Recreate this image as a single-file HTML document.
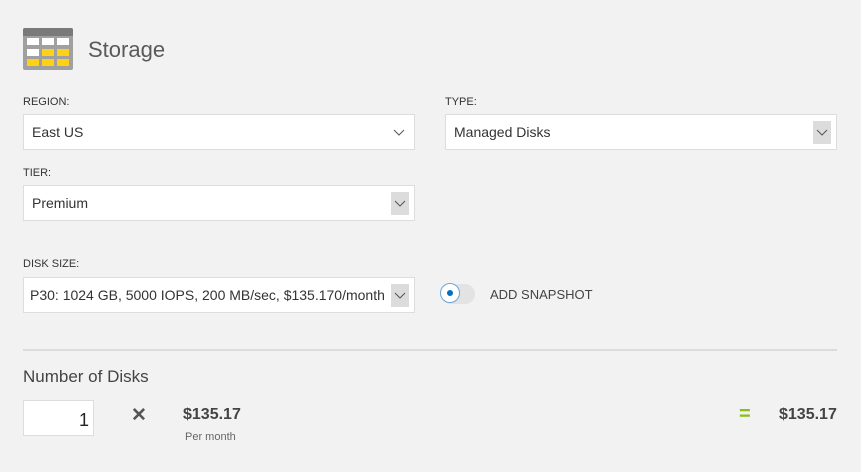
<!DOCTYPE html><html><head><style>
body{margin:0;width:861px;height:472px;background:#f2f2f2;font-family:"Liberation Sans",sans-serif;position:relative;overflow:hidden;color:#333}
.a{position:absolute}
.lbl{font-size:11px;color:#333}
.box{position:absolute;background:#fff;border:1px solid #ddd;box-sizing:border-box;height:36px;font-size:14px;line-height:34px;padding-left:8px;color:#333;white-space:nowrap;overflow:hidden}
.chev{position:absolute;top:6px;width:18px;height:23px;}
.chev.g{background:#dcdcdc}
.chev svg{position:absolute;left:3px;top:8px}
</style></head><body>
<div class="a" style="left:23px;top:28px;width:50px;height:42px;background:#a0a0a0;border-radius:2px"></div>
<div class="a" style="left:23px;top:28px;width:50px;height:8px;background:#7a7a7a;border-radius:2px 2px 0 0"></div>
<div class="a" style="left:27px;top:38px;width:12px;height:7px;background:#fff"></div>
<div class="a" style="left:42px;top:38px;width:12px;height:7px;background:#fff"></div>
<div class="a" style="left:57px;top:38px;width:12px;height:7px;background:#fff"></div>
<div class="a" style="left:27px;top:49px;width:12px;height:7px;background:#fff"></div>
<div class="a" style="left:42px;top:49px;width:12px;height:7px;background:#fcd116"></div>
<div class="a" style="left:57px;top:49px;width:12px;height:7px;background:#fcd116"></div>
<div class="a" style="left:27px;top:59px;width:12px;height:7px;background:#fcd116"></div>
<div class="a" style="left:42px;top:59px;width:12px;height:7px;background:#fcd116"></div>
<div class="a" style="left:57px;top:59px;width:12px;height:7px;background:#fcd116"></div>
<div class="a" style="left:88px;top:37px;font-size:22px;color:#5a5a5a">Storage</div>

<div class="a lbl" style="left:23px;top:96px">REGION:</div>
<div class="box" style="left:23px;top:114px;width:392px">East US<div class="chev" style="left:366px"><svg width="12" height="7"><path d="M1 1l5 5 5-5" fill="none" stroke="#555"/></svg></div></div>
<div class="a lbl" style="left:445px;top:96px">TYPE:</div>
<div class="box" style="left:445px;top:114px;width:392px">Managed Disks<div class="chev g" style="left:367px"><svg width="12" height="7"><path d="M1 1l5 5 5-5" fill="none" stroke="#555"/></svg></div></div>
<div class="a lbl" style="left:23px;top:167px">TIER:</div>
<div class="box" style="left:23px;top:185px;width:392px">Premium<div class="chev g" style="left:367px"><svg width="12" height="7"><path d="M1 1l5 5 5-5" fill="none" stroke="#555"/></svg></div></div>
<div class="a lbl" style="left:23px;top:258px">DISK SIZE:</div>
<div class="box" style="left:23px;top:277px;width:392px;padding-left:6px;font-size:14px">P30: 1024 GB, 5000 IOPS, 200 MB/sec, $135.170/month<div class="chev g" style="left:367px;box-shadow:-4px 0 0 #fff"><svg width="12" height="7"><path d="M1 1l5 5 5-5" fill="none" stroke="#555"/></svg></div></div>

<div class="a" style="left:441px;top:284px;width:34px;height:20px;border-radius:10px;background:#e3e3e3"></div>
<div class="a" style="left:440px;top:283px;width:20px;height:20px;border-radius:50%;background:#fff;border:1px solid #6aa7d8;box-sizing:border-box"></div>
<div class="a" style="left:447px;top:290px;width:6px;height:6px;border-radius:50%;background:#0072c6"></div>
<div class="a" style="left:490px;top:287px;font-size:13px;color:#444">ADD SNAPSHOT</div>

<div class="a" style="left:23px;top:349px;width:814px;height:2px;background:#dcdcdc"></div>
<div class="a" style="left:23px;top:367px;font-size:17px;color:#444">Number of Disks</div>
<div class="a" style="left:23px;top:400px;width:71px;height:36px;background:#fff;border:1px solid #ddd;box-sizing:border-box;text-align:right;font-size:18px;line-height:38px;padding-right:4px;color:#222">1</div>
<div class="a" style="left:131px;top:404px;font-size:19px;font-weight:bold;color:#555">✕</div>
<div class="a" style="left:183px;top:406px;font-size:16px;font-weight:bold;color:#444">$135.17</div>
<div class="a" style="left:185px;top:431px;font-size:11px;color:#666">Per month</div>
<div class="a" style="left:739px;top:403px;font-size:20px;font-weight:bold;color:#8cbd18">=</div>
<div class="a" style="left:779px;top:406px;font-size:16px;font-weight:bold;color:#444">$135.17</div>
</body></html>
